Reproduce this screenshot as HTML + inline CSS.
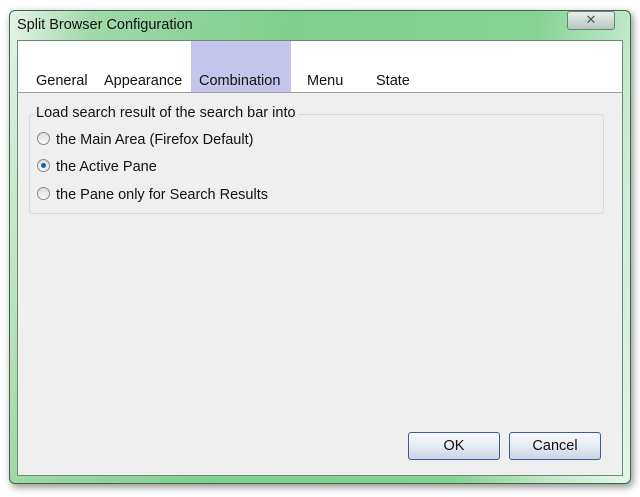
<!DOCTYPE html><html><head><style>
body{margin:0;width:640px;height:497px;background:#fff;position:relative;font-family:"Liberation Sans",sans-serif;overflow:hidden}
.frame{position:absolute;left:9px;top:10px;width:620px;height:472px;border:1px solid #3b6b47;border-radius:6px;background:linear-gradient(100deg,#e8f3ea 0%,#9fd9a8 12%,#7fcf8c 40%,#86d292 75%,#c7ead0 90%,#e7f5ea 100%);box-shadow:2px 3px 8px rgba(0,0,0,.45)}
.title{position:absolute;left:17px;top:17px;font-size:14.5px;color:#111}
.close{position:absolute;left:567px;top:11px;width:46px;height:17px;border:1px solid #6d7f76;border-radius:3px;background:linear-gradient(#e8eeea,#b9c6be);text-align:center;font-size:13px;line-height:16px;color:#555}
.client{position:absolute;left:17px;top:40px;width:604px;height:434px;background:#efefef;border:1px solid #6a8c73}
.tabs{position:absolute;left:0;top:0;width:604px;height:51px;background:#fff;border-bottom:1px solid #a0a0a0}
.tab{position:absolute;top:32px;font-size:14.5px;color:#111}
.sel{position:absolute;left:173px;top:0;width:100px;height:51px;background:#c3c5ec}
.group{position:absolute;left:11px;top:73px;width:573px;height:98px;border:1px solid #d8d8d8;border-radius:3px}
.legend{position:absolute;left:16px;top:64px;background:#efefef;padding:0 2px;font-size:14.5px;color:#111}
.opt{position:absolute;left:19px;font-size:14.5px;color:#111}
.r{display:inline-block;width:11px;height:11px;border:1px solid #8a8a8a;border-radius:50%;background:linear-gradient(#ddd,#fafafa);vertical-align:-1px;margin-right:6px;position:relative}
.r.on::after{content:"";position:absolute;left:3px;top:3px;width:5px;height:5px;border-radius:50%;background:#1c5fb8}
.btn{position:absolute;top:391px;width:90px;height:26px;border:1px solid #3e5d8a;border-radius:3px;background:linear-gradient(#f6f8fb 0%,#e6ebf3 50%,#c9d4e5 100%);font-size:14.5px;text-align:center;line-height:26px;color:#111}
</style></head><body>
<div class="frame"></div>
<div class="title">Split Browser Configuration</div>
<div class="close">✕</div>
<div class="client">
<div class="tabs"><div class="sel"></div>
<span class="tab" style="left:18px">General</span>
<span class="tab" style="left:86px">Appearance</span>
<span class="tab" style="left:181px">Combination</span>
<span class="tab" style="left:289px">Menu</span>
<span class="tab" style="left:358px">State</span></div>
<div class="group"></div>
<div class="legend">Load search result of the search bar into</div>
<div class="opt" style="top:91px"><span class="r"></span>the Main Area (Firefox Default)</div>
<div class="opt" style="top:118px"><span class="r on"></span>the Active Pane</div>
<div class="opt" style="top:146px"><span class="r"></span>the Pane only for Search Results</div>
<div class="btn" style="left:390px">OK</div>
<div class="btn" style="left:491px">Cancel</div>
</div>
</body></html>
